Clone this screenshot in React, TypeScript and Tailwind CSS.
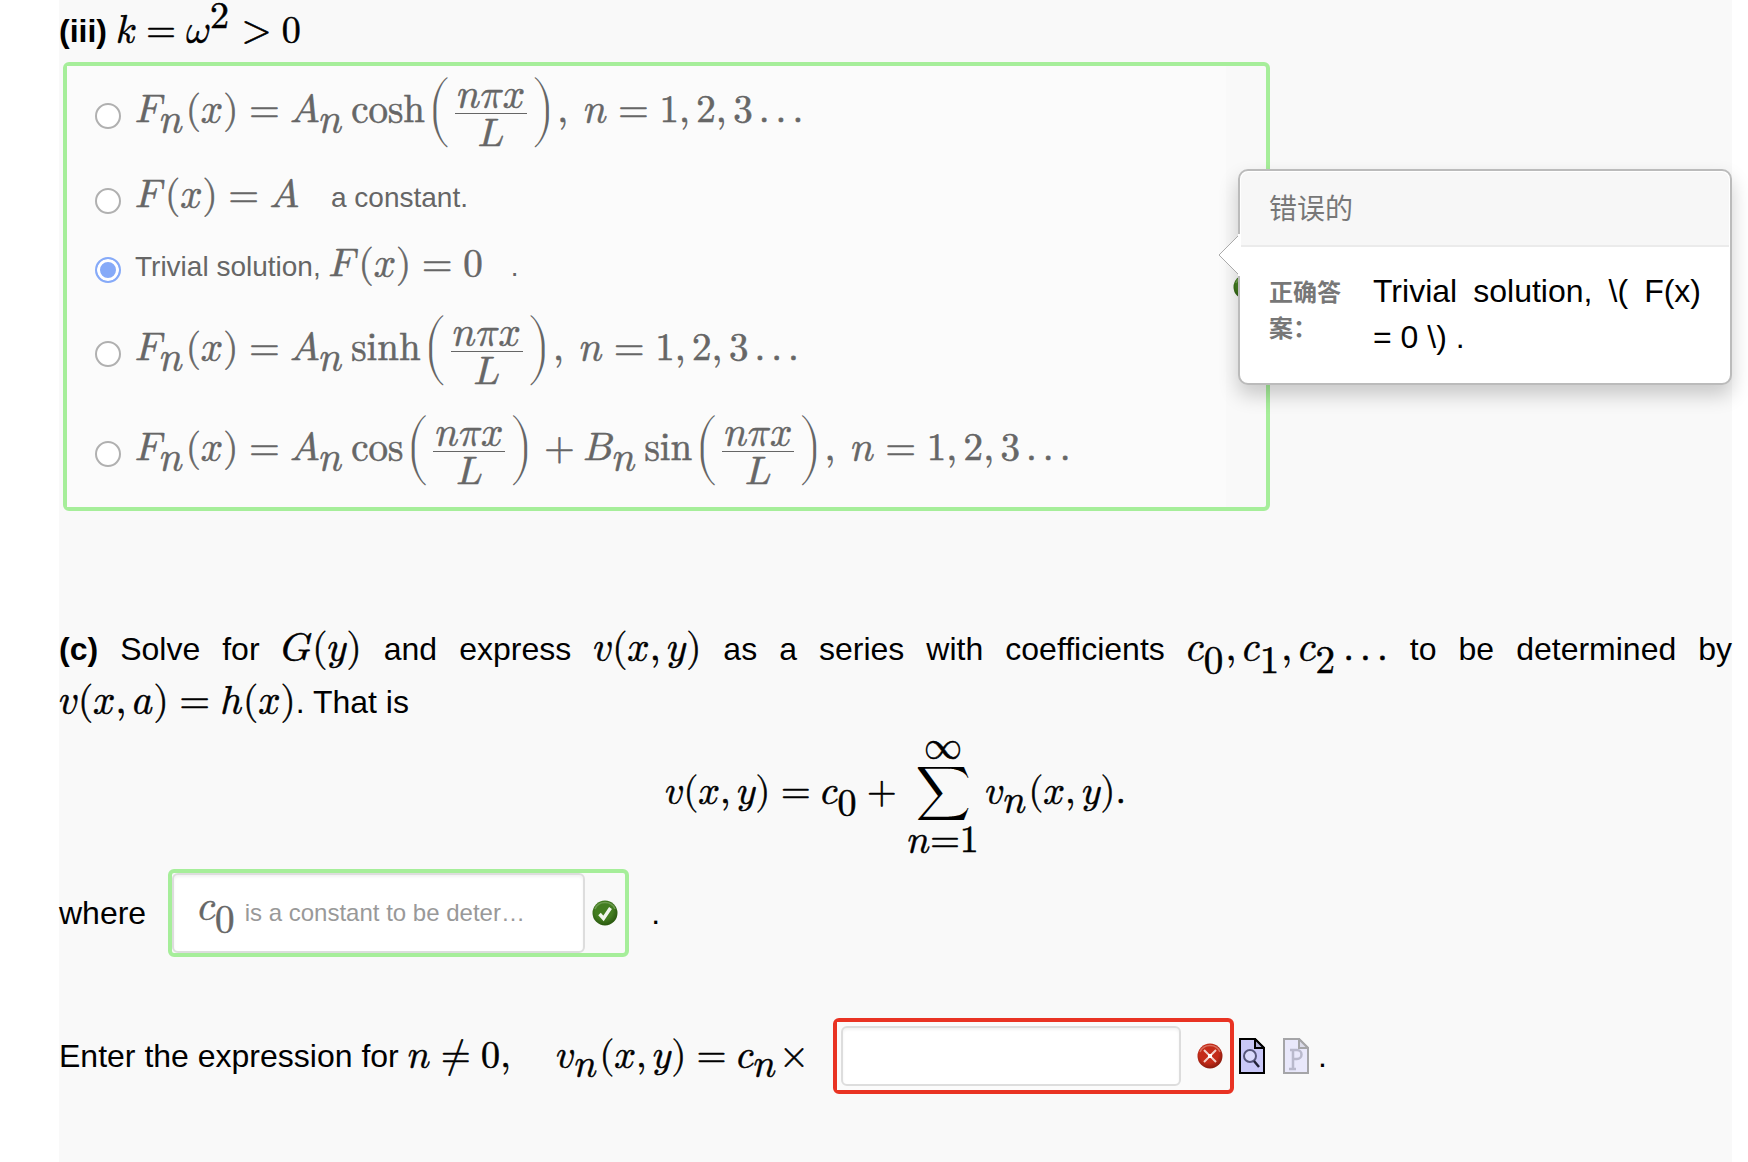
import React from "react";
import type { ReactNode } from "react";

const h = React.createElement;

/* MathML building blocks. Scripts keep the size of the base text. */
const mathFont = "font-['Latin_Modern_Math','Liberation_Serif',serif] [-webkit-text-stroke:0.015em]";

const M = ({ children, block = false, size = "text-[39px]" }: { children: ReactNode; block?: boolean; size?: string }) =>
  h("math", { className: `${mathFont} ${size}`, display: block ? "block" : "inline" }, children);
const I = ({ children }: { children: ReactNode }) => h("mi", null, children);
const N = ({ children }: { children: ReactNode }) => h("mn", { className: "text-[1em]" }, children);
const O = ({ children }: { children: ReactNode }) => h("mo", null, children);
const P = ({ children }: { children: ReactNode }) => h("mo", { stretchy: "false" }, children);
const Thin = () => h("mspace", { width: "6px" });
const Quad = () => h("mspace", { width: "39px" });
const Sub = ({ base, sub }: { base: string; sub: string }) =>
  h("msub", null, h("mi", null, base), h(/\d/.test(sub) ? "mn" : "mi", { className: "text-[1em]" }, sub));
const Dots = () => (
  <>
    <Thin />
    <N>.</N>
    <Thin />
    <N>.</N>
    <Thin />
    <N>.</N>
  </>
);

/* name(a, b) */
const Call = ({ name, args }: { name: ReactNode; args: string[] }) => (
  <>
    {name}
    <P>(</P>
    {args.map((a, i) => (
      <React.Fragment key={a}>
        {i > 0 && <O>,</O>}
        <I>{a}</I>
      </React.Fragment>
    ))}
    <P>)</P>
  </>
);

/* F(x), with room for the slanted top of the F */
const PlainF = () => <Call name={h("mrow", { className: "pr-[5px]" }, <I>F</I>)} args={["x"]} />;

/* fn(nπx / L) */
const Trig = ({ fn }: { fn: string }) => (
  <>
    <Thin />
    <I>{fn}</I>
    {h(
      "mrow",
      { className: "-mx-1" },
      <O>(</O>,
      h(
        "mfrac",
        null,
        h("mrow", { className: "text-[1em] px-[2px]" }, <I>n</I>, <I>π</I>, <I>x</I>),
        h("mrow", { className: "text-[1em] pt-1" }, <I>L</I>),
      ),
      <O>)</O>,
    )}
  </>
);

const Naturals = () => (
  <>
    {h("mo", { lspace: "0", rspace: "10px" }, ",")}
    <Thin />
    <I>n</I>
    <O>=</O>
    <N>1</N>
    <O>,</O>
    <N>2</N>
    <O>,</O>
    <N>3</N>
    <Dots />
  </>
);

const FnEquals = () => (
  <>
    <Call name={<Sub base="F" sub="n" />} args={["x"]} />
    <O>=</O>
    <Sub base="A" sub="n" />
  </>
);

const options: { id: string; body: ReactNode }[] = [
  {
    id: "cosh",
    body: (
      <M>
        <FnEquals />
        <Trig fn="cosh" />
        <Naturals />
      </M>
    ),
  },
  {
    id: "const",
    body: (
      <>
        <M>
          <PlainF />
          <O>=</O>
          <I>A</I>
        </M>
        <span className="ml-8">a constant.</span>
      </>
    ),
  },
  {
    id: "trivial",
    body: (
      <>
        Trivial solution,{" "}
        <M>
          <PlainF />
          <O>=</O>
          <N>0</N>
        </M>
        <span className="ml-7">.</span>
      </>
    ),
  },
  {
    id: "sinh",
    body: (
      <M>
        <FnEquals />
        <Trig fn="sinh" />
        <Naturals />
      </M>
    ),
  },
  {
    id: "cos-sin",
    body: (
      <M>
        <FnEquals />
        <Trig fn="cos" />
        <O>+</O>
        <Sub base="B" sub="n" />
        <Trig fn="sin" />
        <Naturals />
      </M>
    ),
  },
];

const CorrectIcon = () => (
  <svg viewBox="0 0 26 26" className="size-[26px]" role="img" aria-label="correct">
    <defs>
      <radialGradient id="ok" cx="45%" cy="40%" r="58%">
        <stop offset="60%" stopColor="#437d20" />
        <stop offset="100%" stopColor="#2b5a10" />
      </radialGradient>
    </defs>
    <circle cx="13" cy="13" r="12.5" fill="url(#ok)" />
    <path d="M3 9a11 11 0 0 1 20 0" fill="none" stroke="#6d9c50" strokeWidth="1.5" />
    <path d="M7.5 14l4 4.5L18.5 8" fill="none" stroke="#f2f6ee" strokeWidth="3.4" />
  </svg>
);

const WrongIcon = () => (
  <svg viewBox="0 0 26 26" className="size-[26px]" role="img" aria-label="incorrect">
    <defs>
      <radialGradient id="bad" cx="45%" cy="40%" r="58%">
        <stop offset="65%" stopColor="#c42b19" />
        <stop offset="100%" stopColor="#8f1c0f" />
      </radialGradient>
    </defs>
    <circle cx="13" cy="13" r="12.5" fill="url(#bad)" />
    <path d="M3 9a11 11 0 0 1 20 0" fill="none" stroke="#d9705f" strokeWidth="1.5" />
    <path d="M7 7l12 12M19 7L7 19" stroke="#f3cfc8" strokeWidth="2" />
    <rect x="11" y="11" width="4" height="4" fill="#fff" />
  </svg>
);

const DocIcon = ({ faded = false, children }: { faded?: boolean; children: ReactNode }) => (
  <svg viewBox="0 0 26 36" className="h-9 w-[26px]" fill="none" aria-hidden="true">
    <path d="M1 1H16L25 10V35H1Z" fill={faded ? "#e9e8fb" : "#c9c8f8"} stroke={faded ? "#a5a5a8" : "#000"} strokeWidth="2" />
    <path d="M16 1V10H25Z" fill={faded ? "#dcdcea" : "#b0b0d8"} stroke={faded ? "#a5a5a8" : "#000"} strokeWidth="2" />
    {children}
  </svg>
);

const Feedback = () => (
  <aside className="absolute top-[103px] left-full -ml-7 w-[494px] rounded-[10px] border-2 border-[#bbb] bg-white p-px shadow-[0_10px_20px_rgba(0,0,0,0.2)]">
    <svg viewBox="0 0 22 42" className="absolute top-[63px] right-full h-[42px] w-[22px]" aria-hidden="true">
      <path d="M22 0L1 21L22 42" fill="#fff" stroke="#aaa" />
    </svg>
    <span className="absolute top-[63px] left-[-2px] h-[42px] w-[2px] bg-white" />
    <h3 className="rounded-t-[8px] border-b-2 border-[#ebebeb] bg-[#f7f7f7] px-7 pt-[19px] pb-4 text-[28px] leading-[38px] text-[#777]">错误的</h3>
    <dl className="flex items-start gap-8 px-7 pt-[21px] pb-[22px]">
      <dt className="w-[72px] shrink-0 pt-[7px] text-[24px] leading-[36px] font-bold break-all text-[#777]">正确答案：</dt>
      <dd className="flex-1 text-justify text-[32px] leading-[46px]">Trivial solution, \( F(x) = 0 \) .</dd>
    </dl>
  </aside>
);

export default function App() {
  return (
    <div className="min-h-screen bg-white pr-4 pl-[59px] font-['Liberation_Sans','Noto_Sans_CJK_SC',sans-serif] text-[32px] text-black">
      <main className="min-h-screen bg-[#f9f9f9]">
        <h2 className="h-[62px] leading-[62px] whitespace-nowrap">
          <b>(iii)</b>{" "}
          <M size="text-[38px]">
            <I>k</I>
            <O>=</O>
            {h("msup", null, <I>ω</I>, <N>2</N>)}
            <O>&gt;</O>
            <N>0</N>
          </M>
        </h2>

        <section className="relative ml-1 flex w-full max-w-[1207px] rounded-[6px] border-4 border-[#a6ee9a]">
          <fieldset className="flex flex-1 flex-col gap-[29px] bg-[#fbfbfb] pt-[11px] pb-[21px] pl-7 text-[28px] leading-none text-[#666]">
            {options.map((o) => (
              <div key={o.id}>
                <label htmlFor={o.id} className="whitespace-nowrap">
                  <input
                    id={o.id}
                    type="radio"
                    name="solution"
                    defaultChecked={o.id === "trivial"}
                    className="mr-[14px] inline-block size-[26px] appearance-none rounded-full border-2 border-[#b0b0b0] bg-white align-[-7px] checked:border-[#86aaf8] checked:bg-[#86aaf8] checked:shadow-[inset_0_0_0_3px_white]"
                  />
                  {o.body}
                </label>
              </div>
            ))}
          </fieldset>
          <div className="flex w-10 items-center justify-center">
            <CorrectIcon />
          </div>
          <Feedback />
        </section>

        <p className="mt-28 text-justify leading-[53px]">
          <b>(c)</b> Solve for{" "}
          <M>
            <Call name={<I>G</I>} args={["y"]} />
          </M>{" "}
          and express{" "}
          <M>
            <Call name={<I>v</I>} args={["x", "y"]} />
          </M>{" "}
          as a series with coefficients{" "}
          <M>
            <Sub base="c" sub="0" />
            <O>,</O>
            <Sub base="c" sub="1" />
            <O>,</O>
            <Sub base="c" sub="2" />
            <Dots />
          </M>{" "}
          to be determined by{" "}
          <M>
            <Call name={<I>v</I>} args={["x", "a"]} />
            <O>=</O>
            <Call name={<I>h</I>} args={["x"]} />
          </M>
          . That is
        </p>

        <div className="mt-3">
          <M block size="text-[38px]">
            <Call name={<I>v</I>} args={["x", "y"]} />
            <O>=</O>
            <Sub base="c" sub="0" />
            <O>+</O>
            {h(
              "munderover",
              { className: "-ml-1" },
              <O>∑</O>,
              h("mrow", { className: "text-[1em]" }, <I>n</I>, h("mo", { lspace: "0", rspace: "0" }, "="), <N>1</N>),
              h("mi", { className: "text-[1em]" }, "∞"),
            )}
            <Call name={<Sub base="v" sub="n" />} args={["x", "y"]} />
            <I>.</I>
          </M>
        </div>

        <div className="mt-[17px] flex items-center">
          <span>where</span>
          <div className="ml-[22px] flex items-center rounded-[6px] border-4 border-[#a6ee9a]">
            <button
              type="button"
              aria-haspopup="listbox"
              className="flex h-20 w-[413px] items-center gap-2 rounded-[6px] border-2 border-[#ddd] bg-white px-6 text-[24px] whitespace-nowrap text-[#999] shadow-[inset_0_2px_3px_rgba(0,0,0,0.05)]"
            >
              <span className="text-[#666]">
                <M>
                  <Sub base="c" sub="0" />
                </M>
              </span>
              <span>is a constant to be deter…</span>
            </button>
            <div className="flex w-10 justify-center">
              <CorrectIcon />
            </div>
          </div>
          <span className="ml-[22px]">.</span>
        </div>

        <div className="mt-[61px] flex items-center">
          <label htmlFor="expression" className="whitespace-nowrap">
            Enter the expression for{" "}
            <M size="text-[38px]">
              <I>n</I>
              <O>≠</O>
              <N>0</N>
              <O>,</O>
              <Quad />
              <Call name={<Sub base="v" sub="n" />} args={["x", "y"]} />
              <O>=</O>
              <Sub base="c" sub="n" />
              {h("mo", { lspace: "1px", rspace: "0" }, "×")}
            </M>
          </label>
          <div className="ml-6 flex items-stretch rounded-[6px] border-4 border-[#e93323]">
            <div className="bg-[#fbfbfb] py-1 pr-[9px] pl-1">
              <input
                id="expression"
                type="text"
                className="block h-[60px] w-[340px] rounded-[6px] border-2 border-[#ddd] bg-white px-3 shadow-[inset_0_2px_3px_rgba(0,0,0,0.05)]"
              />
            </div>
            <div className="flex w-10 items-center justify-center">
              <WrongIcon />
            </div>
          </div>
          <button type="button" aria-label="Preview" className="ml-[5px]">
            <DocIcon>
              <circle cx="11" cy="18" r="6" stroke="#55557a" strokeWidth="2" fill="#d9d9fb" />
              <path d="M15 23l5 6" stroke="#222238" strokeWidth="2.5" />
            </DocIcon>
          </button>
          <button type="button" aria-label="Plot" className="ml-[18px]" disabled>
            <DocIcon faded>
              <path d="M7 12h7a4 4 0 0 1 0 9h-4M10 12v18M6 31h7" stroke="#b9b9cc" strokeWidth="2.5" />
            </DocIcon>
          </button>
          <span className="ml-[9px]">.</span>
        </div>
      </main>
    </div>
  );
}
